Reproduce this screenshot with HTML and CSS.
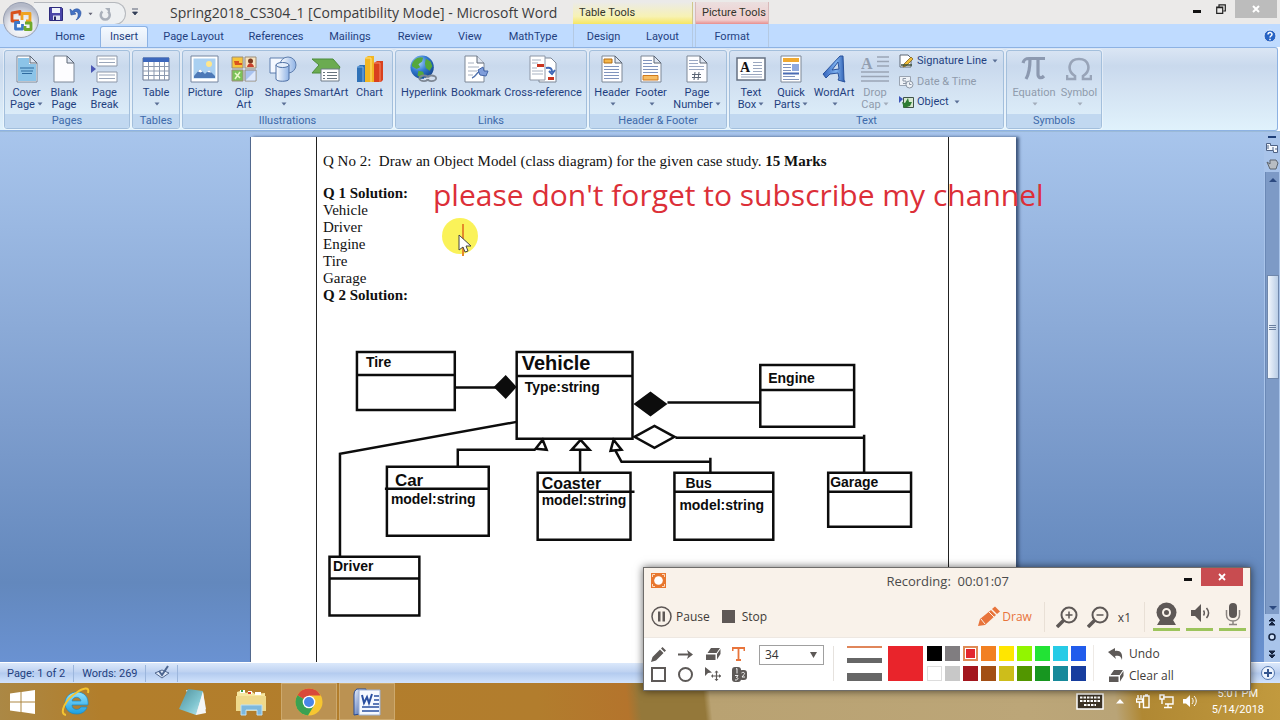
FILE: index.html
```html
<!DOCTYPE html>
<html lang="en">
<head>
<meta charset="utf-8">
<title>Spring2018_CS304_1 [Compatibility Mode] - Microsoft Word</title>
<link rel="stylesheet" href="styles.css">
</head>
<body>
<svg class="defs" aria-hidden="true">
  <defs>
    <linearGradient id="gBlue" x1="0" y1="0" x2="1" y2="0"><stop offset="0" stop-color="#fff"/><stop offset="1" stop-color="#8fb3e6"/></linearGradient>
    <linearGradient id="gArt" x1="0" y1="0" x2="1" y2="0"><stop offset="0" stop-color="#2f5fb8"/><stop offset=".6" stop-color="#7fb2f0"/><stop offset="1" stop-color="#2c5db0"/></linearGradient>
    <radialGradient id="gOrb" cx=".5" cy=".7" r=".6"><stop offset="0" stop-color="#fff"/><stop offset=".6" stop-color="#e6e8ee"/><stop offset="1" stop-color="#b4b9c8"/></radialGradient>
    <radialGradient id="gGlobe" cx=".35" cy=".3" r=".8"><stop offset="0" stop-color="#a8d4ff"/><stop offset=".5" stop-color="#2f78cf"/><stop offset="1" stop-color="#123f86"/></radialGradient>
    <linearGradient id="gPad" x1="0" y1="0" x2="1" y2="1"><stop offset="0" stop-color="#4f8f9a"/><stop offset=".6" stop-color="#7fc4cf"/><stop offset="1" stop-color="#bfe8ee"/></linearGradient>
    <linearGradient id="gIe" x1="0" y1="0" x2="0" y2="1"><stop offset="0" stop-color="#8fe2ff"/><stop offset="1" stop-color="#1c9fe0"/></linearGradient>
    <linearGradient id="gBook" x1="0" y1="0" x2="1" y2="1"><stop offset="0" stop-color="#e9f0fb"/><stop offset="1" stop-color="#2a4fa0"/></linearGradient>
    <symbol id="caret" viewBox="0 0 6 4"><path d="M0.5 0.5h5L3 3.5z" fill="currentColor"/></symbol>
    <symbol id="sheet" viewBox="0 0 22 28"><path d="M1 1h13l7 7v19H1z" fill="#fdfdff" stroke="#7d8796"/><path d="M14 1v7h7z" fill="#dfe6f2" stroke="#5d6675"/></symbol>
    <symbol id="eraser" viewBox="0 0 16 14"><path d="M6 1h9l-3.500 5H2.500z M1 7.500h9.500v5.500H1z M12 7l3.500-5v5L12 12.500z" fill="#5d5957"/></symbol>
  </defs>
</svg>

<div class="desktop">
  <header class="titlebar">
    <div class="qat">
      <button class="ic" aria-label="Save"><svg width="14" height="14" viewBox="0 0 14 14"><path d="M.5.500h12l1 1v12H.500z" fill="#4a45a8" stroke="#2d2a7c"/><path d="M3 1h8v5H3z" fill="#eef2fb"/><path d="M4 8.500h7V13H4z" fill="#dfe4f3"/><path d="M5 9.500h2V13H5z" fill="#28265f"/></svg></button>
      <button class="ic" aria-label="Undo"><svg width="13" height="14" viewBox="0 0 13 14"><path d="M1 2l1 6 5-1-2-1.500c2.500-2 5 0 4 4-.3 1.500-1 2.500-2 3.500 3-1 5-4 5-7C12 2 7 0 3.500 4z" fill="#4472c4" stroke="#274f9c" stroke-width=".6"/></svg></button>
      <svg class="tiny" width="5" height="4"><use href="#caret"/></svg>
      <button class="ic" aria-label="Repeat"><svg width="12" height="14" viewBox="0 0 12 14"><path d="M3.500 4.500A4.500 4.500 0 1 0 9 4.500" fill="none" stroke="#aab0ba" stroke-width="2.500"/><path d="M6 1h5v5z" fill="#aab0ba"/></svg></button>
    </div>
    <svg class="more" width="6" height="8" viewBox="0 0 6 8"><path d="M0 1h6M.500 4h5L3 7z" fill="#333f58" stroke="#333f58" stroke-width=".8"/></svg>
    <h1 class="doc-title">Spring2018_CS304_1 [Compatibility Mode] - Microsoft Word</h1>
    <div class="ctx ctx-table">Table Tools</div>
    <div class="ctx ctx-picture">Picture Tools</div>
    <div class="win-buttons">
      <button aria-label="Minimize"><svg width="8" height="12"><path d="M0 9h8v3H0z" fill="#111"/></svg></button>
      <button aria-label="Restore"><svg width="10" height="10" viewBox="0 0 10 10"><path d="M.7 3h6v6.300h-6zM.700 3.600h6M3 2.500V.800h6.300V7H7.500" fill="none" stroke="#222" stroke-width="1.200"/></svg></button>
      <button class="close" aria-label="Close"><svg width="8" height="8" viewBox="0 0 8 8"><path d="M1 1l6 6M7 1L1 7" stroke="#fff" stroke-width="2"/></svg></button>
    </div>
  </header>
  <button class="orb" aria-label="Office Button"><svg width="38" height="38" viewBox="0 0 38 38"><circle cx="19" cy="19" r="17.500" fill="url(#gOrb)" stroke="#979eb0"/><g fill="none" stroke-width="2.800" stroke-linejoin="round"><path d="M17 20h-7v-8l8-1.500v4" stroke="#d8501c"/><path d="M20 19v-6.500h8v7.500h-4" stroke="#f0a321"/><path d="M18 21.500h-4.500v6.500h7v-5" stroke="#3d78c9"/><path d="M23 25v3.500h6V22h-6" stroke="#6ea92b"/></g></svg></button>

  <nav class="tabs">
    <button>Home</button><button class="on">Insert</button><button>Page Layout</button><button>References</button><button>Mailings</button><button>Review</button><button>View</button><button>MathType</button><i></i><button class="edge-l">Design</button><button class="edge-r">Layout</button><i></i><button class="edge-l edge-r">Format</button>
    <button class="help" aria-label="Help"><svg width="14" height="14" viewBox="0 0 14 14"><circle cx="7" cy="7" r="6" fill="#2763c4" stroke="#dbe8fb"/><path d="M5 5.500C5 3 9 3 9 5.300 9 7 7 7 7 8.500M7 9.800v1.400" fill="none" stroke="#fff" stroke-width="1.500"/></svg></button>
  </nav>

  <section class="ribbon" aria-label="Insert">
    <div class="group">
      <div class="items c-pages">
        <button class="big"><svg width="22" height="28"><use href="#sheet"/><path d="M2 3h11v6h7v17H2z" fill="#8cc4e8"/><path d="M4 13h14M5 16h12M6 18.500h10" stroke="#2e6a9e"/></svg><span>Cover<br>Page<svg class="car" width="6" height="4"><use href="#caret"/></svg></span></button>
        <button class="big"><svg width="22" height="28"><use href="#sheet"/></svg><span>Blank<br>Page</span></button>
        <button class="big"><svg width="28" height="28" viewBox="0 0 28 28"><path d="M6 1h20v10H6zM6 17h20v10H6z" fill="#fff" stroke="#8d97a8"/><path d="M8 4h16M8 7.500h16M8 20h16M8 23.500h16" stroke="#9aa6ba"/><path d="M0 10l5 4-5 4z" fill="#4b57b5"/></svg><span>Page<br>Break</span></button>
      </div>
      <h2>Pages</h2>
    </div>
    <div class="group">
      <div class="items c-tables">
        <button class="big"><svg width="28" height="28" viewBox="0 0 28 28"><path d="M1 3h26v22H1z" fill="#fff" stroke="#6a7892"/><path d="M1 2.500h26V7H1z" fill="#3d68bd"/><path d="M1 11.500h26M1 16h26M1 20.500h26M6.500 7v18M12 7v18M17.500 7v18M22.500 7v18" stroke="#8c99af"/></svg><span>Table<br><svg class="car" width="6" height="4"><use href="#caret"/></svg></span></button>
      </div>
      <h2>Tables</h2>
    </div>
    <div class="group">
      <div class="items c-illus">
        <button class="big"><svg width="30" height="28" viewBox="0 0 30 28"><path d="M1 1h27v26H1z" fill="#fff" stroke="#75859f"/><path d="M3.500 3.500h22v20h-22z" fill="#a9d0f1"/><circle cx="19" cy="9" r="3" fill="#ffe68a"/><path d="M4 21l6-7 5 5 4-4 6 6v2H4z" fill="#4d79b7"/><path d="M8 16.500l2-2.500 2.500 2.500-2 1zM17 17l2-2 2.500 2.500z" fill="#fff"/></svg><span>Picture</span></button>
        <button class="big"><svg width="26" height="28" viewBox="0 0 26 28"><g stroke="#9a8d78"><path d="M1 2h11v11H1z" fill="#f8c53a"/><path d="M14 2h11v11H14z" fill="#f7e3c0"/><path d="M1 15h11v11H1z" fill="#7cc25a"/><path d="M14 15h11v11H14z" fill="#a9c3f0"/></g><path d="M3 6h5v2h3v2H4z" fill="#d9541e"/><circle cx="19.500" cy="6" r="2.500" fill="#7a3b22"/><path d="M16 12c1-5 6-5 7 0z" fill="#c8402c"/><path d="M4 18l5 5M9 17l-5 7" stroke="#e9f7c9" stroke-width="1.500"/><path d="M14.500 25.500l10-10v10z" fill="#dde8fb"/></svg><span>Clip<br>Art</span></button>
        <button class="big"><svg width="28" height="28" viewBox="0 0 28 28"><path d="M1 3h15v15H1z" fill="#f4f8ff" stroke="#5f7fae"/><circle cx="19" cy="10" r="8" fill="url(#gBlue)" stroke="#5f7fae"/><path d="M7 10v14c0 3 13 3 13 0V10z" fill="url(#gBlue)" stroke="#4f71a5"/><ellipse cx="13.500" cy="10" rx="6.500" ry="2.500" fill="#e4eefb" stroke="#4f71a5"/></svg><span>Shapes<br><svg class="car" width="6" height="4"><use href="#caret"/></svg></span></button>
        <button class="big"><svg width="30" height="28" viewBox="0 0 30 28"><path d="M1 4h21l7 8-3 6H1l7-8z" fill="#6bab51" stroke="#4d8c3a"/><path d="M10 14h18v12H10z" fill="#fff" stroke="#6c7a87"/><path d="M12 17.500h2M16 17.500h10M12 20.500h2M16 20.500h10M12 23.500h2M16 23.500h10" stroke="#67747f"/></svg><span>SmartArt</span></button>
        <button class="big"><svg width="28" height="28" viewBox="0 0 28 28"><path d="M1 12l3-2h5v17H1z" fill="#2f71b7"/><path d="M1 12h6v15" fill="none" stroke="#7fb2e6"/><path d="M9 3l3-2h6v26H9z" fill="#f2b521"/><path d="M9 3h6v24" fill="none" stroke="#ffe37a"/><path d="M18 8l3-2h6v19l-2 2h-7z" fill="#d9411e"/><path d="M18 8h6v19" fill="none" stroke="#f58a67"/></svg><span>Chart</span></button>
      </div>
      <h2>Illustrations</h2>
    </div>
    <div class="group">
      <div class="items c-links">
        <button class="big"><svg width="30" height="30" viewBox="0 0 30 30"><circle cx="13" cy="13" r="12.500" fill="url(#gGlobe)"/><path d="M5 5c4-3 7-3 9-2l-1 4-4 3 2 3-4 2-5-3c0-3 1-5 3-7zM17 4l5 3 2 5-3 5-4-3-1-5zM9 17l5 1 1 3-3 4-4-3z" fill="#55a83c"/><g fill="none" stroke="#7d8794" stroke-width="2"><ellipse cx="15" cy="25" rx="5" ry="3"/><ellipse cx="23" cy="25" rx="5" ry="3"/></g><path d="M15 25h8" stroke="#d7dce3" stroke-width="1.500"/></svg><span>Hyperlink</span></button>
        <button class="big"><svg width="26" height="28" viewBox="0 0 26 28"><path d="M2 1h12l7 7v19H2z" fill="#fff" stroke="#7d8796"/><path d="M14 1v7h7" fill="#dfe6f2" stroke="#5d6675"/><path d="M5 8h6M5 12h11M5 16h9M5 20h5" stroke="#a7b1c1"/><path d="M9 23c4-1 4-5 7-6" fill="none" stroke="#5475ae" stroke-width="1.500"/><path d="M15 15l5-3 1 4 4 0-2 5-6-1z" fill="#7f9dda" stroke="#4265a8"/></svg><span>Bookmark</span></button>
        <button class="big"><svg width="28" height="28" viewBox="0 0 28 28"><path d="M10 3h12l5 5v19H10z" fill="#fff" stroke="#7d8796"/><path d="M1 1h15v24H1z" fill="#fff" stroke="#8c96a6"/><path d="M3 5h9M3 8h6M3 13h5M3 16h11M3 19h11" stroke="#a7b1c1"/><path d="M8 9h7v3H8zM19 22h6v3h-6z" fill="#c9341f"/><path d="M17 13c5-1 6 1 6 4M20 16l3 3 3-4" fill="none" stroke="#3e68b8" stroke-width="2"/></svg><span>Cross-reference</span></button>
      </div>
      <h2>Links</h2>
    </div>
    <div class="group">
      <div class="items c-head">
        <button class="big"><svg width="22" height="28"><use href="#sheet"/><path d="M3 4h8v4H3z" fill="#f4b64b" stroke="#b36c12"/><path d="M3 11.500h15M3 14.500h15M3 17.500h15M3 20.500h15M3 23.500h15" stroke="#7f93bd"/></svg><span>Header<br><svg class="car" width="6" height="4"><use href="#caret"/></svg></span></button>
        <button class="big"><svg width="22" height="28"><use href="#sheet"/><path d="M3 5.500h9M3 8.500h9M3 11.500h15M3 14.500h15M3 17.500h15" stroke="#7f93bd"/><path d="M3 20.500h15V25H3z" fill="#f7bc62" stroke="#d07a1c"/></svg><span>Footer<br><svg class="car" width="6" height="4"><use href="#caret"/></svg></span></button>
        <button class="big"><svg width="22" height="28"><use href="#sheet"/><path d="M3 5.500h9M3 8.500h9M3 11.500h15M3 14.500h15" stroke="#9aa8c4"/><path d="M9 17l-1 8M13 17l-1 8M6 19.500h9M6 22.500h9" stroke="#5a6475"/></svg><span>Page<br>Number<svg class="car" width="6" height="4"><use href="#caret"/></svg></span></button>
      </div>
      <h2>Header &amp; Footer</h2>
    </div>
    <div class="group">
      <div class="items c-text">
        <button class="big"><svg width="30" height="28" viewBox="0 0 30 28"><path d="M1 3h28v22H1z" fill="#fff" stroke="#667182" stroke-width="1.500"/><text class="icon-a" x="4" y="17">A</text><path d="M17 7.500h9M17 10.500h9M17 13.500h9M17 16.500h9M5 19.500h21M5 22h21" stroke="#9aa7bf"/></svg><span>Text<br>Box<svg class="car" width="6" height="4"><use href="#caret"/></svg></span></button>
        <button class="big"><svg width="22" height="28" viewBox="0 0 22 28"><path d="M1 1h20v26H1z" fill="#fff" stroke="#7d8796"/><path d="M3 3h16v4H3z" fill="#f0a92f"/><path d="M3 9.500h8M3 12.500h8M3 15.500h8M3 21.500h12M3 24.500h16" stroke="#7f93bd"/><path d="M12 9h7v7h-7z" fill="#8fa9dd"/><path d="M3 17.500h16v2H3z" fill="#4b6cb4"/></svg><span>Quick<br>Parts<svg class="car" width="6" height="4"><use href="#caret"/></svg></span></button>
        <button class="big"><svg width="24" height="28" viewBox="0 0 24 28"><path d="M1 19l2-2 15-16h3l1 24 1 2-7-2 1-2-1-5-8 1-2 2-2 2zM10 15l7-1-1-7z" fill="url(#gArt)" fill-rule="evenodd" stroke="#2a539c"/></svg><span>WordArt<br><svg class="car" width="6" height="4"><use href="#caret"/></svg></span></button>
        <button class="big" disabled><svg width="28" height="28" viewBox="0 0 28 28"><text class="icon-drop" x="0" y="14">A</text><path d="M16 2h12M16 6.500h12M16 11h12M0 17h28M0 21.500h28M0 26h28" stroke="#9aa5b5" stroke-width="1.500"/></svg><span>Drop<br>Cap<svg class="car" width="6" height="4"><use href="#caret"/></svg></span></button>
        <div class="stack">
          <button class="row"><svg width="15" height="14" viewBox="0 0 15 14"><path d="M1 1h8l3 3v9H1z" fill="#fff" stroke="#5d6675"/><path d="M5 10l7-7 2 2-7 7-3 1z" fill="#f0bd37" stroke="#705414" stroke-width=".7"/><path d="M2 11h11" stroke="#3a4f3a" stroke-width="1.500"/></svg>Signature Line<svg class="car" width="6" height="4"><use href="#caret"/></svg></button>
          <button class="row" disabled><svg width="15" height="14" viewBox="0 0 15 14"><path d="M.500 1.500h11v9H.500z" fill="#eef2f7" stroke="#9aa4b2"/><path d="M7 3.500H4V6h3v2.500H4" fill="none" stroke="#8d97a6"/><circle cx="10.500" cy="9.500" r="3.500" fill="#eef2f7" stroke="#8d97a6"/><path d="M10.500 7.500v2h2" fill="none" stroke="#8d97a6"/></svg>Date &amp; Time</button>
          <button class="row"><svg width="15" height="14" viewBox="0 0 15 14"><path d="M0 1l4 3-4 4z" fill="#3c55b8"/><path d="M4.500 2.500h10v10h-10z" fill="#d7e8d0" stroke="#3f5348"/><path d="M3 7l3 1 3-5 1 4 3 0-2 4-6 2z" fill="#2e7d32"/></svg>Object<svg class="car" width="6" height="4"><use href="#caret"/></svg></button>
        </div>
      </div>
      <h2>Text</h2>
    </div>
    <div class="group">
      <div class="items c-sym">
        <button class="big" disabled><svg width="26" height="28" viewBox="0 0 26 28"><path d="M2 8c1-4 3-4.500 6-4.500h16M9 4c0 9-1 15-4 20M17 4v15c0 4 3 5 6 2" fill="none" stroke="#8c99b0" stroke-width="3.200"/></svg><span>Equation<br><svg class="car" width="6" height="4"><use href="#caret"/></svg></span></button>
        <button class="big" disabled><svg width="26" height="28" viewBox="0 0 26 28"><path d="M1 20v4h8v-3C0 15 3 4 13 4s13 11 4 17v3h8v-4" fill="none" stroke="#98a4b8" stroke-width="2.600"/></svg><span>Symbol<br><svg class="car" width="6" height="4"><use href="#caret"/></svg></span></button>
      </div>
      <h2>Symbols</h2>
    </div>
  </section>

  <main class="workspace">
    <div class="canvas">
      <article class="page">
        <div class="cell">
          <p class="question">Q No 2:&nbsp; Draw an Object Model (class diagram) for the given case study. <b>15 Marks</b></p>
          <p><b>Q 1 Solution:</b></p>
          <p>Vehicle</p><p>Driver</p><p>Engine</p><p>Tire</p><p>Garage</p>
          <p><b>Q 2 Solution:</b></p>
          <svg class="diagram" viewBox="317 340 632 290" role="img" aria-label="Class diagram">
            <g class="lines">
              <path d="M357 352h98v58h-98zM357 375h98M517 352h116v87H517zM517 376h116M761 365h94v62h-94zM761 390h94M387 467h102v69H387zM385 489h104M538 473h93v67h-93zM538 492h97M675 473h99v67h-99zM675 492h99M829 473h83v54h-83zM829 492h83M329.500 557h90v59h-90zM329.500 579h90"/>
              <path d="M456 387.500h42M517 422L340 454v103M668 402.500h93M676 438h189v-2M865 435v38M458 467v-17h78M580.500 472v-27M616 451l6 11h90M711 458v15"/>
              <path class="open" d="M635 437l20-11 20 11-20 11z"/>
              <path class="open" d="M543 440l4 10-11-1zM581 440l9 10h-18zM614 440l8 10-11 1z"/>
              <path class="solid" d="M494 387l12-12 11 12-11 12zM634 404l17-12.500 17 12.500-17 12.500z"/>
            </g>
            <g class="labels">
              <text x="366" y="367">Tire</text><text class="xl" x="522" y="370">Vehicle</text><text x="525" y="392">Type:string</text><text x="769" y="383">Engine</text>
              <text class="lg" x="395" y="486">Car</text><text x="391" y="504">model:string</text><text class="md" x="542" y="489">Coaster</text><text x="542" y="505">model:string</text>
              <text x="686" y="488">Bus</text><text x="680" y="510">model:string</text><text x="831" y="487">Garage</text><text x="333" y="571">Driver</text>
            </g>
          </svg>
        </div>
      </article>
      <div class="annotation">please don't forget to subscribe my channel</div>
      <svg class="pointer" width="38" height="38" viewBox="0 0 38 38"><circle cx="19" cy="18" r="18" fill="#f9f03c" opacity=".85"/><path d="M22 6v32" stroke="#e58a2c" stroke-width="2"/><path d="M18 17v15l4-3 2 5 3-1-2-5h5z" fill="#fff" stroke="#444"/></svg>
    </div>
    <aside class="scroll">
      <svg width="16" height="40" viewBox="0 0 16 40"><path d="M4 5h8" stroke="#1f3f78" stroke-width="2"/><path d="M2.500 11.500h4v2h7v7h-4v-2h-7z" fill="#f5f8fd" stroke="#4e6285"/><path d="M4 13v4M9 15v3M12 16v2" stroke="#4e6285"/><path d="M3 30l3 2v-4h6l2 3-2 6H6z" fill="#b8bdc2" stroke="#5d656e"/></svg>
      <div class="track">
        <button aria-label="Scroll up"><svg width="10" height="6"><path d="M1 5l4-4 4 4z" fill="#2c4a80"/></svg></button>
        <div class="thumb"><i></i><i></i><i></i></div>
        <button class="down" aria-label="Scroll down"><svg width="10" height="6"><path d="M1 1l4 4 4-4z" fill="#2c4a80"/></svg></button>
      </div>
      <svg width="16" height="48" viewBox="0 0 16 48"><path d="M5 7l3-3 3 3zM5 11l3-3 3 3zM5 37h6l-3 3zM5 41h6l-3 3z" fill="#14233f" stroke="#14233f"/><circle cx="8" cy="23" r="3" fill="#cfe0f7" stroke="#14233f" stroke-width="1.500"/></svg>
    </aside>
  </main>

  <footer class="status">
    <span>Page: 1 of 2</span><span>Words: 269</span>
    <span><svg width="16" height="14" viewBox="0 0 16 14"><path d="M1 8l7-3 7 3-7 5z" fill="#dfe9f8" stroke="#53698f"/><path d="M5 6l3 4 6-9" fill="none" stroke="#4d6691" stroke-width="2"/></svg></span>
    <button aria-label="Zoom in"><svg width="16" height="16" viewBox="0 0 16 16"><circle cx="8" cy="8" r="6.500" fill="#edf4fe" stroke="#5578b0"/><path d="M4 8h8M8 4v8" stroke="#35568f" stroke-width="2"/></svg></button>
  </footer>

  <footer class="taskbar">
    <button class="t-start" aria-label="Start"><svg width="26" height="24" viewBox="0 0 26 24"><path d="M0 3.500l10.500-1.500v9.500H0zM11.500 2L25 0v11.500H11.500zM0 12.500h10.500V22L0 20.500zM11.500 12.500H25V24l-13.500-2z" fill="#fff"/></svg></button>
    <button class="t-ie" aria-label="Internet Explorer"><svg width="30" height="30" viewBox="0 0 30 30"><path d="M27 18H11c0 5 7 6 9 2h6c-1 4-5 7-10 7C8 27 4 22 4 16S9 5 16 5s12 5 11 13zM11 14h9c-1-5-8-5-9 0z" fill="url(#gIe)" stroke="#1988c4" stroke-width=".7"/><path d="M5 28C-3 27 5 12 15 6 22 1 29-1 27 6" fill="none" stroke="#f4c430" stroke-width="2"/></svg></button>
    <button class="t-pad" aria-label="Notepad"><svg width="28" height="28" viewBox="0 0 28 28"><path d="M8 2l17 2 3 17-10 6z" fill="#e8eef0"/><path d="M10 1l15 2-7 24L1 21z" fill="url(#gPad)"/><path d="M25 4l3 21-10 2z" fill="#f4f6f7"/></svg></button>
    <button class="t-dir" aria-label="File Explorer"><svg width="32" height="28" viewBox="0 0 32 28"><path d="M2 4l6-2 3 3 5-2 4 3 10-1v18H2z" fill="#f6e7a0"/><path d="M5 2h5v3H5zM13 3h4v3h-4zM20 4h6v3h-6z" fill="#fff"/><path d="M6 2h2v2H6z" fill="#3aa24b"/><path d="M13 4h3v2h-3z" fill="#d9412b"/><path d="M1 8h30v15H1z" fill="#efd98b"/><path d="M6 27V17h21v10h-5v-5H11v5z" fill="#7db8dd" stroke="#bfe0f3"/></svg></button>
    <button class="t-app" aria-label="Google Chrome"><svg width="28" height="28" viewBox="0 0 28 28"><circle cx="14" cy="14" r="13.500" fill="#f6c631"/><path d="M14 14L2.300 7.200A13.500 13.500 0 0 1 25.700 7.500H14z" fill="#d94a3a"/><path d="M14 14L2.300 7.200A13.500 13.500 0 0 0 13 27.500l6-10z" fill="#3aa152"/><circle cx="14" cy="14" r="6.300" fill="#fff"/><circle cx="14" cy="14" r="5" fill="#4a86e8"/></svg></button>
    <button class="t-app" aria-label="Microsoft Word"><svg width="28" height="28" viewBox="0 0 28 28"><path d="M4 1h9v24l-12 2V7c0-3 1-5 3-6z" fill="url(#gBook)" stroke="#274a94"/><path d="M6 2h21v25H6z" fill="#f6f9ff" stroke="#9eb2d6"/><path d="M9 7l2 8 3-6 2 6 3-9" fill="none" stroke="#2a4fa0" stroke-width="2"/><path d="M21 8h5M21 12h5M20 16h6M9 19h17M9 23h17" stroke="#2a4fa0" stroke-width="1.500"/></svg></button>
    <div class="tray">
      <svg class="spaced" width="28" height="17" viewBox="0 0 28 17"><path d="M1 1h26v15H1z" fill="#3b3225" stroke="#fff" stroke-width="1.500"/><path d="M4 4.500h20M4 8h20M8 12h12" stroke="#fff" stroke-width="2" stroke-dasharray="2.500 1"/></svg>
      <svg class="spaced" width="8" height="5" viewBox="0 0 8 5"><path d="M0 4.500L4 0l4 4.500z" fill="#fff"/></svg>
      <svg width="15" height="15" viewBox="0 0 15 15"><path d="M7.500 2h5.500v11.500H7.500zM9 1h3M2 1v3M5 1v3M.500 5h6v3h-6zM3.500 8v6" fill="none" stroke="#fff" stroke-width="1.400"/></svg>
      <svg width="15" height="15" viewBox="0 0 15 15"><path d="M4 3h10v7H6M9 10v3M5 13.500h8M1 1h4v4H1zM3 5v5" fill="none" stroke="#fff" stroke-width="1.400"/></svg>
      <svg width="15" height="15" viewBox="0 0 15 15"><path d="M1 5h3l4-4v12L4 9.500H1z" fill="#fff"/><path d="M10 4c1.500 2 1.500 4 0 6M12 2c3 3 3 7 0 10" fill="none" stroke="#fff"/></svg>
      <div class="clock">5:01 PM<br>5/14/2018</div>
    </div>
  </footer>

  <section class="recorder" aria-label="Recorder">
    <div class="rec-title">
      <svg width="15" height="15" viewBox="0 0 15 15"><path d="M0 0h15v15H0z" fill="#e8772e"/><circle cx="7.500" cy="7.500" r="4.300" fill="#fff"/><path d="M1.500 4V1.500H4M11 1.500h2.500V4M13.500 11v2.500H11M4 13.500H1.500V11" fill="none" stroke="#fbd9bf"/></svg>
      <span class="rec-time">Recording:&nbsp; 00:01:07</span>
      <button class="rmin" aria-label="Minimize"><svg width="8" height="3"><path d="M0 0h8v3H0z" fill="#111"/></svg></button>
      <button class="rclose" aria-label="Close"><svg width="8" height="8" viewBox="0 0 8 8"><path d="M1 1l6 6M7 1L1 7" stroke="#fff" stroke-width="1.800"/></svg></button>
    </div>
    <div class="rec-bar">
      <button class="lab pause"><svg width="21" height="21" viewBox="0 0 21 21"><circle cx="10.500" cy="10.500" r="9.500" fill="none" stroke="#5e5856" stroke-width="1.500"/><path d="M7 5.500h2.500v10H7zM11.500 5.500H14v10h-2.500z" fill="#5e5856"/></svg>Pause</button>
      <button class="lab stop"><svg width="13" height="13"><path d="M0 0h13v13H0z" fill="#5e5856"/></svg>Stop</button>
      <button class="lab draw"><svg width="23" height="21" viewBox="0 0 23 21"><path d="M1 20l2-7L14 4l5 5L8 19z" fill="#e8743b"/><path d="M15 3l3-2.500 5 5L20 8z" fill="#e8743b"/><path d="M4 13l4 5M12 6l5 5" stroke="#f9f2ea"/></svg>Draw</button>
      <div class="zooms">
        <button aria-label="Magnify"><svg width="22" height="22" viewBox="0 0 22 22"><circle cx="13" cy="9" r="7.500" fill="none" stroke="#5e5856" stroke-width="2"/><path d="M8 14l-7 7" stroke="#5e5856" stroke-width="3.500"/><path d="M9.500 9h7M13 5.500v7" stroke="#5e5856" stroke-width="1.500"/></svg></button>
        <button aria-label="Reduce"><svg width="22" height="22" viewBox="0 0 22 22"><circle cx="13" cy="9" r="7.500" fill="none" stroke="#5e5856" stroke-width="2"/><path d="M8 14l-7 7" stroke="#5e5856" stroke-width="3.500"/><path d="M9.500 9h7" stroke="#5e5856" stroke-width="1.500"/></svg></button>
        <span>x1</span>
      </div>
      <div class="inputs">
        <button aria-label="Webcam"><svg width="21" height="24" viewBox="0 0 21 24"><circle cx="10.500" cy="10.500" r="10" fill="#5e5856"/><path d="M4 18h13l3 5H1z" fill="#5e5856"/><circle cx="10.500" cy="10.500" r="3.500" fill="none" stroke="#f9f2ea" stroke-width="2"/></svg></button>
        <button aria-label="Speaker"><svg width="20" height="24" viewBox="0 0 20 24"><path d="M1 8h4l6-6v18l-6-6H1z" fill="#5e5856"/><path d="M13.500 8.500c1 1.500 1 3.500 0 5M16.500 6c2.500 3 2.500 7 0 10" fill="none" stroke="#5e5856" stroke-width="1.500"/></svg></button>
        <button aria-label="Microphone"><svg width="16" height="24" viewBox="0 0 16 24"><rect x="4" y="1" width="8" height="15" rx="4" fill="#5e5856"/><path d="M1.500 8v5c0 8 13 8 13 0V8M8 19v3M4 22.500h8" fill="none" stroke="#8a8480" stroke-width="1.500"/></svg></button>
      </div>
    </div>
    <div class="rec-tools">
      <div class="tools">
        <button aria-label="Pencil"><svg width="15" height="15" viewBox="0 0 15 15"><path d="M0 15l1.500-5L9 2.500 12.500 6 5 13.500zM10 1.500L11.500 0 15 3.500 13.500 5z" fill="#5d5957"/></svg></button>
        <button aria-label="Arrow"><svg width="15" height="11" viewBox="0 0 15 11"><path d="M0 5.500h12" stroke="#5d5957" stroke-width="2"/><path d="M9 1l6 4.500L9 10l1.500-4.500z" fill="#5d5957"/></svg></button>
        <button aria-label="Eraser"><svg width="16" height="14"><use href="#eraser"/></svg></button>
        <button aria-label="Text"><svg width="13" height="14" viewBox="0 0 13 14"><path d="M.600 4V1h11.800v3M6.500 1v12M4 13h5" fill="none" stroke="#e8743b" stroke-width="1.800"/></svg></button>
        <button aria-label="Rectangle"><svg width="15" height="15"><path d="M1 1h13v13H1z" fill="none" stroke="#5d5957" stroke-width="2"/></svg></button>
        <button aria-label="Ellipse"><svg width="15" height="15"><circle cx="7.500" cy="7.500" r="6.500" fill="none" stroke="#5d5957" stroke-width="2"/></svg></button>
        <button aria-label="Move"><svg width="16" height="14" viewBox="0 0 16 14"><path d="M0 0l7 5.500-4 .5-3 3z" fill="#5d5957"/><path d="M7 9h9M11.500 4.500v9" stroke="#5d5957" stroke-width="1.200"/><path d="M11.500 3.500l2 2h-4zM11.500 14l2-2h-4zM6 9l2-2v4zM16 9l-2-2v4z" fill="#5d5957"/></svg></button>
        <button aria-label="Numbering"><svg width="15" height="15" viewBox="0 0 15 15"><rect x="0" y="0" width="9" height="15" rx="3" fill="#5d5957"/><rect x="7" y="3" width="8" height="10" rx="3" fill="#5d5957"/><path d="M4 2l1-.500v5M3 8.500h3L4.500 10.500c2.500 0 1.500 3-1.500 2.500M9.500 6c2-1.500 4 0 2.500 1.500L10 10h3" fill="none" stroke="#fff" stroke-width=".9"/></svg></button>
      </div>
      <div class="size"><select aria-label="Text size"><option>34</option></select><svg width="7" height="6"><path d="M0 0h7L3.500 6z" fill="#5d5957"/></svg></div>
      <div class="weights"><i></i><i></i><i></i></div>
      <div class="current"></div>
      <div class="palette">
        <i class="k0"></i><i class="k1"></i><i class="k2"></i><i class="k3"></i><i class="k4"></i><i class="k5"></i><i class="k6"></i><i class="k7"></i><i class="k8"></i>
        <i class="k9"></i><i class="k10"></i><i class="k11"></i><i class="k12"></i><i class="k13"></i><i class="k14"></i><i class="k15"></i><i class="k16"></i><i class="k17"></i>
      </div>
      <div class="acts">
        <button><svg width="16" height="14" viewBox="0 0 16 14"><path d="M0 5l7-4v3c5-1 8 2 7 9-1-4-3-5-7-4l1 3z" fill="#5d5957"/></svg>Undo</button>
        <button><svg width="16" height="14"><use href="#eraser"/></svg>Clear all</button>
      </div>
    </div>
  </section>
</div>
</body>
</html>
```
FILE: styles.css
```css
* { box-sizing: border-box; }
body { margin: 0; font: 11px/12px Roboto, "Noto Sans", sans-serif; color: #1f3f7f; }
button { border: 0; padding: 0; margin: 0; background: none; font: inherit; color: inherit; }
svg { display: block; }
h1, h2, p { margin: 0; font-weight: normal; }
.defs { position: absolute; width: 0; height: 0; }
.desktop { position: relative; display: flex; flex-direction: column; height: 100vh; min-height: 480px; overflow: hidden; }

/* title bar */
.titlebar { display: grid; grid-template-columns: 126px 44px 403px 120px 2px 74px 1fr; height: 24px; flex: none; background: #ebeae9; align-items: stretch; }
.qat { display: flex; align-items: center; gap: 6px; margin: 2px 0 1px 34px; padding-left: 15px; border: 1px solid #b5b8bd; border-left: 0; border-radius: 0 12px 12px 0; background: #eef0f2; }
.tiny { color: #667; }
.more { margin: 8px 0 0 6px; }
.doc-title { color: #3c3c3c; font-family: "Open Sans", "Noto Sans", sans-serif; font-size: 14px; line-height: 26px; white-space: nowrap; }
.ctx { color: #33332a; line-height: 14px; padding: 4px 6px 0; margin-top: 2px; white-space: nowrap; }
.ctx-table { background: linear-gradient(#ebeae9, #f7f2b4 60%, #f6e34e); border-right: 1px solid #cfc88a; }
.ctx-picture { grid-column: 6; background: linear-gradient(#ebdfdf, #f0cccc 75%, #e26f6f); border: 1px solid #d9b9b9; border-width: 0 1px; }
.win-buttons { display: flex; justify-content: flex-end; align-items: stretch; padding-right: 3px; }
.win-buttons button { width: 24px; display: flex; justify-content: center; padding-top: 1px; }
.win-buttons button + button { padding-top: 4px; }
.win-buttons .close { width: 42px; height: 18px; margin-left: 2px; padding-top: 5px; background: #bcbcbc; }
.orb { position: absolute; left: 2px; top: 1px; z-index: 2; }

/* tabs */
.tabs { display: grid; grid-template-columns: 60px 48px 91px 74px 74px 56px 54px 72px 4px 60px 60px 2px 74px 1fr; height: 23px; flex: none; padding-left: 40px; background: #bfdbff; font-size: 11px; }
.tabs button { white-space: nowrap; padding-top: 2px; }
.tabs .on { margin-top: 2px; padding-top: 0; background: linear-gradient(#f4f9ff, #dfe9f6); border: 1px solid #8db2e3; border-bottom: 0; border-radius: 3px 3px 0 0; }
.tabs .edge-l { border-left: 1px solid #b4c9e2; }
.tabs .edge-r { border-right: 1px solid #b4c9e2; }
.tabs .help { justify-self: end; padding: 0 3px 0 0; }

/* ribbon */
.ribbon { display: flex; gap: 2px; flex: none; height: 84px; padding: 2px 4px 1px; margin-right: 2px; border: 1px solid #8db2e3; border-left: 0; border-radius: 0 3px 3px 0; background: linear-gradient(#dbe6f4, #c9d9ed 22%, #d3e2f2 50%, #e0f2fc); }
.group { display: flex; flex-direction: column; border: 1px solid #a3bfdc; border-radius: 3px; box-shadow: 0 0 0 1px rgba(255, 255, 255, .4); overflow: hidden; }
.group h2 { height: 14px; line-height: 14px; font-size: 11px; text-align: center; color: #3e6aaa; background: #c1d8f0; flex: none; }
.items { display: grid; flex: 1; padding: 0 2px; }
.c-pages { grid-template-columns: 39px 36px 45px; }
.c-tables { grid-template-columns: 42px; }
.c-illus { grid-template-columns: 40px 38px 40px 46px 41px; }
.c-links { grid-template-columns: 52px 52px 82px; }
.c-head { grid-template-columns: 40px 38px 54px; }
.c-text { grid-template-columns: 38px 42px 44px 38px 107px; }
.c-sym { grid-template-columns: 50px 40px; }
.big { display: flex; flex-direction: column; align-items: center; justify-content: flex-start; padding-top: 4px; white-space: nowrap; }
.big > svg { height: 28px; margin-bottom: 4px; flex: none; }
.big > span { display: block; }
.car { display: inline-block; vertical-align: 2px; margin-left: 2px; color: #5a6f96; }
button:disabled { color: #8f9bac; }
button:disabled .car { color: #a3adbb; }
.stack { display: flex; flex-direction: column; justify-content: space-between; padding: 2px 0 4px 5px; }
.row { display: flex; align-items: center; gap: 3px; height: 16px; white-space: nowrap; }
.row .car { margin-top: 0; }
.icon-a { font: bold 14px "Liberation Serif", serif; fill: #111; }
.icon-drop { font: bold 16px "Liberation Serif", serif; fill: #929eb0; }

/* workspace */
.workspace { display: flex; flex: 1; min-height: 0; background: linear-gradient(#a8c5ec, #7d9dcd 55%, #6388bd 85%, #6a92d2); border-top: 1px solid #9bbad8; }
.canvas { position: relative; flex: 1; min-width: 0; display: flex; justify-content: center; padding: 5px 0 0 2px; overflow: hidden; }
.page { width: 766px; flex: none; background: #fff; border-left: 1px solid #52698e; box-shadow: 3px 0 3px #3d557c; padding: 0 67px 0 65px; }
.cell { height: 100%; border: 1px solid #222; border-width: 0 1px; padding: 16px 0 0; font: 15px/17px "Liberation Serif", serif; color: #111; }
.cell p { padding-left: 6px; white-space: nowrap; }
.cell .question { padding-bottom: 15px; }
.diagram { width: 100%; margin-top: 36px; }
.lines { fill: none; stroke: #0c0c0c; stroke-width: 2.500; }
.lines .open { fill: #fff; }
.lines .solid { fill: #0c0c0c; stroke: none; }
.labels { font: bold 14px "Liberation Sans", sans-serif; fill: #0c0c0c; }
.labels .xl { font-size: 20px; }
.labels .lg { font-size: 17px; }
.labels .md { font-size: 16px; }
.annotation { position: absolute; left: 433px; top: 43px; font-family: "Open Sans", "Noto Sans", sans-serif; font-size: 30px; line-height: 40px; white-space: nowrap; color: #dc2f38; }
.pointer { position: absolute; left: 441px; top: 86px; }

.scroll { display: flex; flex-direction: column; align-items: center; width: 16px; flex: none; background: #a9c4ea; }
.track { display: flex; flex-direction: column; align-items: center; flex: 1; width: 14px; padding: 5px 0 3px; background: #7d9ac6; border-left: 1px solid #6b89b6; }
.thumb { display: flex; flex-direction: column; justify-content: center; align-items: center; gap: 1px; width: 12px; height: 24%; margin-top: 92px; border: 1px solid #6f87ab; background: linear-gradient(90deg, #f1f6fc, #b9cde6); }
.thumb i { width: 7px; height: 1px; background: #6a7f9f; }
.down { margin-top: auto; }

/* status bar and taskbar */
.status { display: flex; align-items: center; flex: none; height: 21px; border-top: 1px solid #fff; background: linear-gradient(#dbe8fb, #bed2f1 45%, #b3cbef 50%, #d2e3fc); }
.status span { height: 17px; line-height: 17px; border-right: 1px solid #9cb6dc; padding: 0 8px 0 7px; white-space: nowrap; }
.status span + span { padding-left: 8px; padding-right: 7px; }
.status button { margin: 0 4px 0 auto; }
.taskbar { display: flex; align-items: stretch; flex: none; height: 37px; background: linear-gradient(84deg, #ab8845 0, #b27e2b 8%, #b27d2d 42%, #b4742c 49%, #94783a 50%, #94783a 55%, #b9a272 55.500%, #bca678 80%, #b9a477 87%, #b08833 89%, #c29a3e 100%); }
.taskbar button { display: flex; align-items: center; justify-content: center; }
.t-start { width: 46px; }
.t-ie { width: 60px; }
.t-pad { width: 60px; margin-left: 56px; }
.t-dir { width: 57px; }
.taskbar .t-app { width: 56px; margin-left: 2px; border: 1px solid #cda96d; background: #bb9252; }
.tray { display: flex; align-items: center; gap: 8px; margin-left: auto; padding-right: 16px; color: #fff; }
.tray > svg { flex: none; }
.tray .spaced { margin-right: 4px; }
.clock { margin-left: 7px; line-height: 16px; text-align: center; white-space: nowrap; }

/* recorder */
.recorder { position: absolute; right: 29px; bottom: 29px; width: 608px; background: #fff; border: 1px solid #6e6c6a; box-shadow: 0 0 8px rgba(0, 0, 0, .6); color: #3f3b39; font-family: "Open Sans", "Noto Sans", sans-serif; font-size: 13px; line-height: 18px; }
.rec-title { display: grid; grid-template-columns: 1fr auto 192px 42px; align-items: start; height: 28px; padding: 0 7px 0 7px; background: #f9f2ea; }
.rec-title > svg { margin-top: 5px; }
.rec-time { font-size: 13px; padding-top: 4px; color: #4b4b4b; }
.rmin { justify-self: end; padding: 10px 9px 0; }
.rclose { display: flex; align-items: center; justify-content: center; height: 18px; background: #c84c50; }
.rec-bar { display: flex; align-items: center; height: 41px; padding: 0 4px 0 7px; background: #f9f2ea; }
.lab { display: flex; align-items: center; gap: 4px; font-size: 12px; }
.stop { gap: 7px; margin-left: 12px; }
.draw { margin-left: auto; gap: 2px; color: #e8743b; }
.zooms { display: flex; align-items: center; gap: 9px; margin-left: 12px; height: 30px; padding: 0 13px 0 11px; border: 1px solid #e9e0d6; border-width: 0 1px; }
.zooms span { font-size: 12px; padding-top: 3px; }
.inputs { display: flex; gap: 6px; padding-left: 8px; }
.inputs button { display: flex; justify-content: center; width: 27px; height: 29px; border-bottom: 3px solid #9cc45c; }
.rec-tools { display: flex; align-items: flex-start; padding: 7px 0 8px 7px; height: 53px; border-top: 1px solid #eee8e2; }
.tools { display: grid; grid-template-columns: repeat(4, 27px); grid-template-rows: 18px 18px; gap: 2px 0; }
.tools button { display: flex; align-items: center; justify-content: flex-start; }
.size { position: relative; height: 20px; margin-right: 9px; }
.size select { display: block; appearance: none; width: 65px; height: 20px; padding: 0 5px; border: 1px solid #a0a0a0; border-radius: 0; background: #fff; font: 12px/18px "Open Sans", sans-serif; color: #333; }
.size svg { position: absolute; right: 7px; top: 7px; }
.weights { display: flex; flex-direction: column; justify-content: space-between; width: 48px; padding-left: 13px; margin: 1px 7px 0 0; border-left: 1px solid #e6e2de; height: 35px; }
.weights i { width: 35px; height: 2px; background: #e0865a; }
.weights i + i { height: 5px; background: #666; }
.weights i + i + i { height: 8px; }
.current { width: 35px; height: 35px; margin: 1px 4px 0 0; background: #e9242b; }
.palette { display: grid; grid-template-columns: repeat(9, 15px); grid-template-rows: 15px 15px; gap: 5px 3px; padding: 1px 7px 0 0; border-right: 1px solid #eeeae6; }
.k0 { background: #000; } .k1 { background: #807d80; } .k2 { background: #e3262d; border: 2px solid #e08a55; box-shadow: inset 0 0 0 1px #fff; } .k3 { background: #f28022; } .k4 { background: #ffe600; } .k5 { background: #92f500; } .k6 { background: #22e335; } .k7 { background: #27cbe6; } .k8 { background: #215cec; }
.k9 { background: #fff; border: 1px solid #ddd; } .k10 { background: #c8c8c8; } .k11 { background: #a3161e; } .k12 { background: #a24f15; } .k13 { background: #cdbd1b; } .k14 { background: #529600; } .k15 { background: #179620; } .k16 { background: #17899a; } .k17 { background: #173d9e; }
.acts { display: flex; flex-direction: column; gap: 4px; padding-left: 14px; font-size: 12px; }
.acts button { display: flex; align-items: center; gap: 5px; height: 18px; white-space: nowrap; }
```
